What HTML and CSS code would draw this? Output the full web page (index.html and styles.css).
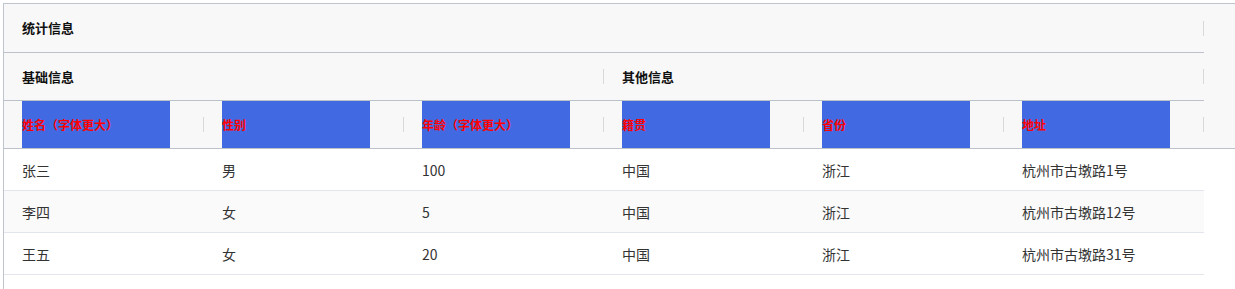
FILE: index.html
```html
<!DOCTYPE html>
<html lang="zh">
<head>
<meta charset="utf-8">
<title>统计信息</title>
<link rel="stylesheet" href="styles.css">
</head>
<body>
<div class="page">
  <div class="table">
    <div class="thead">
      <div class="th th-all"><span class="th-text">统计信息</span><span class="sep"></span></div>
      <div class="gutter"></div>
      <div class="th th-group"><span class="th-text">基础信息</span><span class="sep"></span></div>
      <div class="th th-group"><span class="th-text">其他信息</span><span class="sep"></span></div>
      <div class="th th-col"><span class="col-box">姓名（字体更大）</span><span class="sep"></span></div>
      <div class="th th-col"><span class="col-box">性别</span><span class="sep"></span></div>
      <div class="th th-col"><span class="col-box">年龄（字体更大）</span><span class="sep"></span></div>
      <div class="th th-col"><span class="col-box">籍贯</span><span class="sep"></span></div>
      <div class="th th-col"><span class="col-box">省份</span><span class="sep"></span></div>
      <div class="th th-col"><span class="col-box">地址</span><span class="sep"></span></div>
    </div>
    <div class="tbody">
      <div class="tr">
        <div class="td">张三</div><div class="td">男</div><div class="td">100</div><div class="td">中国</div><div class="td">浙江</div><div class="td">杭州市古墩路1号</div>
      </div>
      <div class="tr striped">
        <div class="td">李四</div><div class="td">女</div><div class="td">5</div><div class="td">中国</div><div class="td">浙江</div><div class="td">杭州市古墩路12号</div>
      </div>
      <div class="tr">
        <div class="td">王五</div><div class="td">女</div><div class="td">20</div><div class="td">中国</div><div class="td">浙江</div><div class="td">杭州市古墩路31号</div>
      </div>
    </div>
  </div>
</div>
</body>
</html>
```
FILE: styles.css
```css
html, body {
  margin: 0;
  padding: 0;
  overflow: hidden;
  background: #ffffff;
}
body {
  font-family: "Noto Sans CJK SC", "Noto Sans", sans-serif;
}
.page {
  padding: 3px 0 0 3px;
}
.table {
  border-left: 1px solid #c0c4cc;
  border-top: 1px solid #c0c4cc;
  height: 286px;
  box-sizing: border-box;
}
.thead {
  display: grid;
  grid-template-columns: repeat(6, 200px) 1fr;
  grid-template-rows: 49px 48px 47px;
  background: #f8f8f8;
  border-bottom: 1px solid #bcc1ca;
}
.gutter {
  grid-column: 7;
  grid-row: 1 / 4;
}
.th {
  display: flex;
  align-items: center;
  justify-content: space-between;
  box-sizing: border-box;
}
.th-all {
  grid-column: 1 / 7;
  grid-row: 1;
  border-bottom: 1px solid #bcc1ca;
  padding-left: 18px;
}
.th-group {
  grid-column: span 3;
  border-bottom: 1px solid #bcc1ca;
  padding-left: 18px;
}
.th-text {
  font-size: 13px;
  font-weight: bold;
  color: #111111;
  line-height: 18px;
}
.th-col {
  padding-left: 18px;
  align-items: stretch;
}
.col-box {
  width: 148px;
  background: #4169e1;
  color: #ff0000;
  font-size: 12px;
  font-weight: bold;
  display: flex;
  align-items: center;
  line-height: 16px;
}
.sep {
  width: 1px;
  height: 15px;
  background: #d9d9d9;
  align-self: center;
}
.tbody {
  display: flex;
  flex-direction: column;
}
.tr {
  display: grid;
  grid-template-columns: repeat(6, 200px);
  width: 1200px;
  height: 42px;
  box-sizing: border-box;
  border-bottom: 1px solid #e2e5ec;
}
.tr.striped {
  background: #fafafa;
}
.td {
  display: flex;
  align-items: center;
  padding-left: 18px;
  font-size: 14px;
  color: #333333;
}
```
